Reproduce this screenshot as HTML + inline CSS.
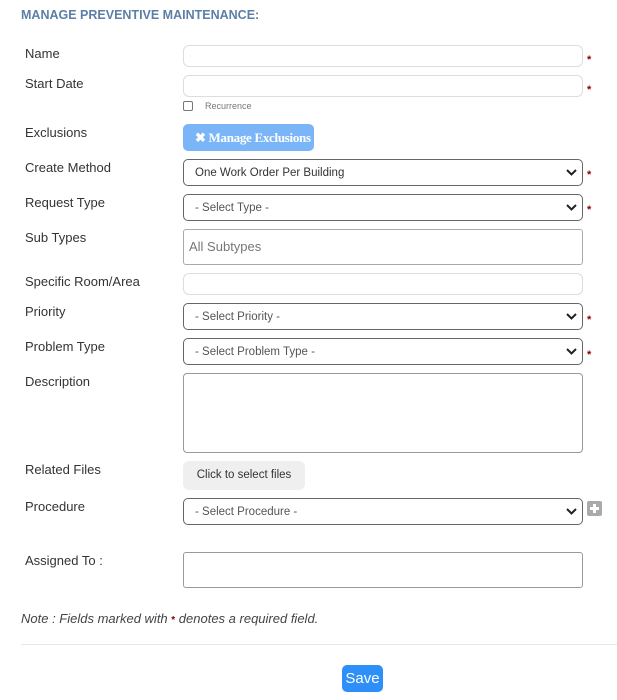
<!DOCTYPE html>
<html><head><meta charset="utf-8"><style>
*{box-sizing:border-box;margin:0;padding:0}
body{width:617px;height:700px;background:#fff;font-family:"Liberation Sans",sans-serif;position:relative;overflow:hidden;color:#333}
.a{position:absolute}
.t{left:21px;top:8px;font-size:12.5px;font-weight:bold;color:#5b7fa6}
.l{left:25px;font-size:13px;color:#333;line-height:15px}
.in{left:183px;width:400px;border:1px solid #ddd;border-radius:6px;height:22px}
.sel{left:183px;width:400px;border:1px solid #666;border-radius:5px;height:27px;font-size:11.5px;color:#333;padding:7px 11px;line-height:12px}
.sel.g{color:#555}
.sel svg{position:absolute;right:5px;top:9px}
.st{left:587px;font-size:11px;color:#8b0000;font-weight:bold}
.box{left:183px;width:400px;border:1px solid #aaa;border-radius:3px}
</style></head><body>
<div class="a t">MANAGE PREVENTIVE MAINTENANCE:</div>

<div class="a l" style="top:46px">Name</div>
<div class="a in" style="top:45px"></div><div class="a st" style="top:54px">*</div>

<div class="a l" style="top:76px">Start Date</div>
<div class="a in" style="top:75px"></div><div class="a st" style="top:84px">*</div>
<div class="a" style="left:183px;top:101px;width:10px;height:10px;border:1px solid #777;border-radius:2px"></div>
<div class="a" style="left:205px;top:101px;font-size:9px;color:#777">Recurrence</div>

<div class="a l" style="top:125px">Exclusions</div>
<div class="a" style="left:183px;top:124px;width:131px;height:27px;background:#7ab6f7;border-radius:5px;color:#fff;font-family:'Liberation Serif',serif;font-size:13px;font-weight:bold;line-height:27px;padding-left:12px;letter-spacing:-0.3px">✖ Manage Exclusions</div>

<div class="a l" style="top:160px">Create Method</div>
<div class="a sel" style="top:159px">One Work Order Per Building<svg width="11" height="8" viewBox="0 0 11 8"><path d="M1 1l4.5 4.5L10 1" fill="none" stroke="#222" stroke-width="2"/></svg></div><div class="a st" style="top:169px">*</div>

<div class="a l" style="top:195px">Request Type</div>
<div class="a sel g" style="top:194px">- Select Type -<svg width="11" height="8" viewBox="0 0 11 8"><path d="M1 1l4.5 4.5L10 1" fill="none" stroke="#222" stroke-width="2"/></svg></div><div class="a st" style="top:204px">*</div>

<div class="a l" style="top:230px">Sub Types</div>
<div class="a box" style="top:229px;height:36px;font-size:13px;color:#777;padding:9px 5px">All Subtypes</div>

<div class="a l" style="top:274px">Specific Room/Area</div>
<div class="a in" style="top:273px"></div>

<div class="a l" style="top:304px">Priority</div>
<div class="a sel g" style="top:303px">- Select Priority -<svg width="11" height="8" viewBox="0 0 11 8"><path d="M1 1l4.5 4.5L10 1" fill="none" stroke="#222" stroke-width="2"/></svg></div><div class="a st" style="top:314px">*</div>

<div class="a l" style="top:339px">Problem Type</div>
<div class="a sel g" style="top:338px">- Select Problem Type -<svg width="11" height="8" viewBox="0 0 11 8"><path d="M1 1l4.5 4.5L10 1" fill="none" stroke="#222" stroke-width="2"/></svg></div><div class="a st" style="top:349px">*</div>

<div class="a l" style="top:374px">Description</div>
<div class="a box" style="top:373px;height:80px;border-color:#999;border-radius:4px"></div>

<div class="a l" style="top:462px">Related Files</div>
<div class="a" style="left:183px;top:461px;width:122px;height:29px;background:#efefef;border-radius:6px;font-size:11.5px;color:#333;line-height:29px;text-align:center">Click to select files</div>

<div class="a l" style="top:499px">Procedure</div>
<div class="a sel g" style="top:498px">- Select Procedure -<svg width="11" height="8" viewBox="0 0 11 8"><path d="M1 1l4.5 4.5L10 1" fill="none" stroke="#222" stroke-width="2"/></svg></div>
<div class="a" style="left:587px;top:501px;width:15px;height:15px;background:#aaa;border-radius:2px"><svg width="15" height="15"><path d="M7.5 3v9M3 7.5h9" stroke="#fff" stroke-width="3"/></svg></div>

<div class="a l" style="top:553px">Assigned To :</div>
<div class="a box" style="top:552px;height:36px;border-color:#999"></div>

<div class="a" style="left:21px;top:611px;font-size:13px;font-style:italic;color:#444">Note : Fields marked with <span style="color:#8b0000;font-style:normal;font-size:10px;font-weight:bold">*</span> denotes a required field.</div>
<div class="a" style="left:21px;top:644px;width:596px;height:1px;background:#e6e6e6"></div>
<div class="a" style="left:342px;top:665px;width:41px;height:27px;background:#2e8ff8;border-radius:5px;color:#fff;font-size:15px;line-height:27px;text-align:center">Save</div>
</body></html>
